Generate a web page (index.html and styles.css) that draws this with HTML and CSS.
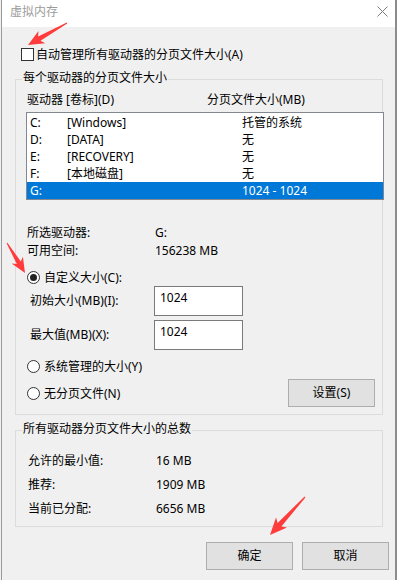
FILE: index.html
```html
<!DOCTYPE html>
<html lang="zh-CN">
<head>
<meta charset="utf-8">
<title>虚拟内存</title>
<link rel="stylesheet" href="styles.css">
</head>
<body>
<div class="window">
  <div class="titlebar">
    <span class="title">虚拟内存</span>
    <svg class="close" width="11" height="11" viewBox="0 0 11 11"><path d="M0.5 0.5 L10.5 10.5 M10.5 0.5 L0.5 10.5" stroke="#7a7a7a" stroke-width="1" fill="none"/></svg>
  </div>

  <div class="check-row"><span class="checkbox"></span><span>自动管理所有驱动器的分页文件大小(A)</span></div>

  <div class="group g1">
    <div class="legend">每个驱动器的分页文件大小</div>
    <div class="list-head"><span class="h-drive">驱动器 [卷标](D)</span><span>分页文件大小(MB)</span></div>
    <div class="listbox">
      <div class="row"><span class="c1">C:</span><span class="c2">[Windows]</span><span>托管的系统</span></div>
      <div class="row"><span class="c1">D:</span><span class="c2">[DATA]</span><span>无</span></div>
      <div class="row"><span class="c1">E:</span><span class="c2">[RECOVERY]</span><span>无</span></div>
      <div class="row"><span class="c1">F:</span><span class="c2">[本地磁盘]</span><span>无</span></div>
      <div class="row selected"><span class="c1">G:</span><span class="c2"></span><span>1024 - 1024</span></div>
    </div>

    <div class="info">
      <div class="kv"><span class="k">所选驱动器:</span><span>G:</span></div>
      <div class="kv"><span class="k">可用空间:</span><span>156238 MB</span></div>
    </div>

    <div class="radio-row first"><span class="radio on"></span><span>自定义大小(C):</span></div>

    <div class="input-row"><span class="in-label">初始大小(MB)(I):</span><div class="textbox">1024</div></div>
    <div class="input-row second"><span class="in-label">最大值(MB)(X):</span><div class="textbox">1024</div></div>

    <div class="radio-row sys"><span class="radio"></span><span>系统管理的大小(Y)</span></div>

    <div class="button-row">
      <div class="radio-row inline"><span class="radio"></span><span>无分页文件(N)</span></div>
      <button class="btn">设置(S)</button>
    </div>
  </div>

  <div class="group g2">
    <div class="legend">所有驱动器分页文件大小的总数</div>
    <div class="totals">
      <div class="tv"><span class="k">允许的最小值:</span><span>16 MB</span></div>
      <div class="tv"><span class="k">推荐:</span><span>1909 MB</span></div>
      <div class="tv"><span class="k">当前已分配:</span><span>6656 MB</span></div>
    </div>
  </div>

  <div class="footer">
    <button class="btn">确定</button>
    <button class="btn">取消</button>
  </div>
</div>

<svg class="arrows" width="397" height="580" viewBox="0 0 397 580">
  <polygon fill="#ff3b3b" points="28,45 45.3,43.2 40.5,40.8 67.2,23.4 66.8,22.6 38.1,36.4 38.5,31.0"/>
  <polygon fill="#ff3b3b" points="25,273 22.9,256.8 20.8,261.5 7.4,242.7 6.6,243.3 16.8,263.9 11.7,263.4"/>
  <polygon fill="#ff3b3b" points="270,535 287,527.6 281.4,526.5 305.4,497.4 304.6,496.6 277.6,522.9 276,517.4"/>
</svg>
</body>
</html>
```

FILE: styles.css
```css
html, body {
  margin: 0;
  padding: 0;
}
body {
  position: relative;
  width: 397px;
  height: 580px;
  overflow: hidden;
  background: #f0f0f0;
  font-family: "Noto Sans", "Noto Sans CJK SC", sans-serif;
  font-size: 12px;
  color: #000;
}
.window {
  margin-left: 1px;
  width: 396px;
  min-height: 580px;
  box-sizing: border-box;
  border-left: 1px solid #9a9a9a;
  border-right: 2px solid #8c8c8c;
  background: #f0f0f0;
}
.titlebar {
  height: 27px;
  background: #fff;
  display: flex;
  align-items: flex-start;
  justify-content: space-between;
}
.title {
  margin: 4px 0 0 8px;
  line-height: 16px;
  color: #9b9b9b;
}
.close {
  margin: 6px 7px 0 0;
}
.check-row {
  margin: 20px 0 0 19px;
  height: 15px;
  line-height: 15px;
  display: flex;
  align-items: center;
  gap: 2px;
}
.checkbox {
  width: 13px;
  height: 13px;
  box-sizing: border-box;
  border: 1px solid #333;
  background: #fff;
}
.group {
  margin-left: 13px;
  width: 368px;
  box-sizing: border-box;
  border: 1px solid #dcdcdc;
}
.g1 {
  margin-top: 17px;
  padding-bottom: 7px;
}
.g2 {
  margin-top: 15px;
  padding-bottom: 5px;
}
.legend {
  margin: -10px 0 0 6px;
  padding: 0 1px;
  width: max-content;
  line-height: 16px;
  background: #f0f0f0;
}
.list-head {
  margin-top: 6px;
  padding-left: 11px;
  line-height: 16px;
  display: flex;
}
.h-drive {
  width: 180px;
}
.listbox {
  margin: 4px 0 0 10px;
  width: 358px;
  box-sizing: border-box;
  border: 1px solid #828790;
  background: #fff;
  padding-top: 1px;
}
.row {
  height: 17px;
  line-height: 17px;
  display: flex;
  padding-left: 3px;
}
.row.selected {
  background: #0078d7;
  color: #fff;
}
.c1 {
  width: 37px;
}
.c2 {
  width: 175px;
}
.info {
  margin-top: 24px;
  padding-left: 11px;
}
.kv {
  display: flex;
  line-height: 18px;
}
.kv .k {
  width: 128px;
}
.radio-row {
  display: flex;
  align-items: center;
  gap: 4px;
  height: 17px;
  line-height: 17px;
  padding-left: 11px;
}
.radio-row.first {
  margin-top: 9px;
}
.radio-row.sys {
  margin-top: 8px;
}
.radio-row.inline {
  padding-left: 0;
}
.radio {
  width: 13px;
  height: 13px;
  box-sizing: border-box;
  border: 1px solid #333;
  border-radius: 50%;
  background: #fff;
  display: flex;
  align-items: center;
  justify-content: center;
}
.radio.on::after {
  content: "";
  width: 7px;
  height: 7px;
  border-radius: 50%;
  background: #222;
}
.input-row {
  display: flex;
  align-items: center;
  height: 30px;
  padding-left: 14px;
}
.input-row.second {
  margin-top: 4px;
}
.in-label {
  width: 124px;
  line-height: 16px;
}
.textbox {
  width: 89px;
  height: 30px;
  box-sizing: border-box;
  border: 1px solid #7a7a7a;
  background: #fff;
  padding: 3px 5px 0;
  line-height: 16px;
}
.button-row {
  margin-top: 4px;
  display: flex;
  align-items: center;
  justify-content: space-between;
  padding: 0 7px 0 11px;
}
.btn {
  width: 87px;
  height: 28px;
  box-sizing: border-box;
  margin: 0;
  padding: 0;
  border: 1px solid #adadad;
  background: #e1e1e1;
  font-family: "Noto Sans", "Noto Sans CJK SC", sans-serif;
  font-size: 12px;
  line-height: 26px;
  color: #000;
  text-align: center;
}
.totals {
  margin-top: 12px;
  padding-left: 12px;
}
.tv {
  display: flex;
  line-height: 24px;
}
.tv .k {
  width: 128px;
}
.footer {
  margin-top: 15px;
  display: flex;
  justify-content: flex-end;
  gap: 9px;
  padding-right: 6px;
}
.arrows {
  position: absolute;
  left: 0;
  top: 0;
  pointer-events: none;
}
```
